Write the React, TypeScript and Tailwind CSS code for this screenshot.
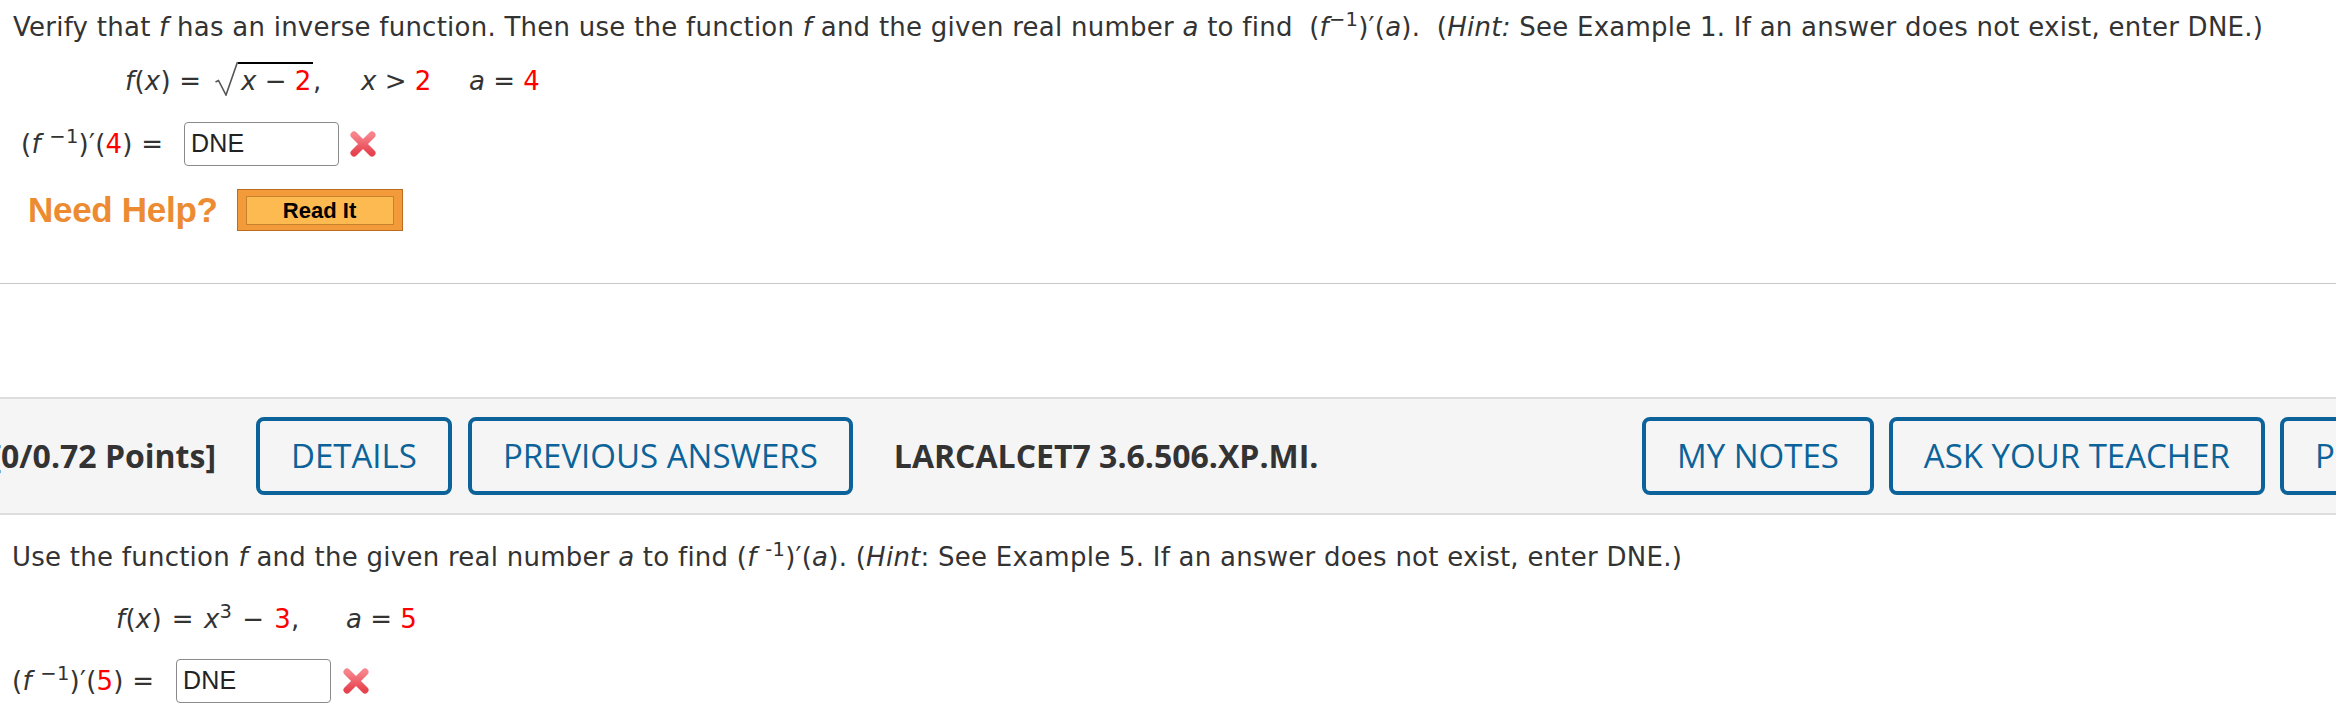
import React from "react";

const Red: React.FC<{ children: React.ReactNode }> = ({ children }) => (
  <span className="text-[#f00]">{children}</span>
);

const WrongMark: React.FC = () => (
  <svg width="28" height="28" viewBox="0 0 28 28" className="shrink-0">
    <defs>
      <linearGradient id="xg" x1="0" y1="0" x2="0" y2="1">
        <stop offset="0" stopColor="#f7838b" />
        <stop offset="1" stopColor="#e6434f" />
      </linearGradient>
    </defs>
    <path
      d="M5 5 L23 23 M23 5 L5 23"
      stroke="url(#xg)"
      strokeWidth="7"
      strokeLinecap="round"
      fill="none"
    />
  </svg>
);

const AnswerBox: React.FC<{ value: string }> = ({ value }) => (
  <div className="w-[155px] h-[44px] shrink-0 border-[1.5px] border-[#8a8a8a] rounded-[4px] bg-white flex items-center pl-[6px] font-['Liberation_Sans',Arial,sans-serif] text-[25px] text-[#222]">
    {value}
  </div>
);

const BarButton: React.FC<{ label: string; className?: string }> = ({
  label,
  className = "",
}) => (
  <div
    className={`h-[78px] shrink-0 border-[4px] border-[#0b6399] rounded-[8px] px-[31px] flex items-center text-[33px] text-[#0b6399] ${className}`}
  >
    {label}
  </div>
);

const App: React.FC = () => {
  return (
    <div className="w-[2336px] h-[714px] overflow-hidden bg-white text-[#333] font-['DejaVu_Sans',Verdana,sans-serif] text-[26px] tracking-[0.25px]">
      {/* first question */}
      <div className="pl-[13px] pt-[12px]">
        <p className="h-[30px] leading-[30px] whitespace-nowrap">
          Verify that <i>f</i> has an inverse function. Then use the function{" "}
          <i>f</i> and the given real number <i>a</i> to find{" "}
          <span className="ml-[8px]">
            (<i>f</i>
            <sup>−1</sup>)′(<i>a</i>).
          </span>{" "}
          <span className="ml-[8px]">
            (<i>Hint:</i> See Example 1. If an answer does not exist, enter
            DNE.)
          </span>
        </p>

        <div className="mt-[24px] pl-[112px] h-[30px] flex items-end leading-[30px] whitespace-nowrap">
          <span className="w-[90px] shrink-0">
            <i>f</i>(<i>x</i>) =
          </span>
          <span className="inline-flex items-end">
            <svg width="23" height="35" viewBox="0 0 23 35" className="shrink-0">
              <path
                d="M0.5 21 L3.5 19.5 L11 34 L22.5 1"
                stroke="#555"
                strokeWidth="1.6"
                fill="none"
              />
            </svg>
            <span className="border-t-2 border-black pt-[2px] pl-[3px] w-[75px] flex gap-[8px]">
              <i>x</i>
              <span>−</span>
              <Red>2</Red>
            </span>
          </span>
          <span className="w-[48px] shrink-0">,</span>
          <span className="w-[108px] shrink-0 flex gap-[8px]">
            <i>x</i>
            <span>&gt;</span>
            <Red>2</Red>
          </span>
          <span className="flex gap-[8px]">
            <i>a</i>
            <span>=</span>
            <Red>4</Red>
          </span>
        </div>

        <div className="mt-[26px] pl-[8px] h-[44px] flex items-center whitespace-nowrap">
          <span className="w-[163px] shrink-0 leading-[30px]">
            (<i>f</i> <sup>−1</sup>)′(<Red>4</Red>) =
          </span>
          <AnswerBox value="DNE" />
          <span className="ml-[10px]">
            <WrongMark />
          </span>
        </div>

        <div className="mt-[23px] pl-[15px] h-[42px] flex items-center whitespace-nowrap">
          <span className="font-['Liberation_Sans',Arial,sans-serif] font-bold text-[35px] tracking-[-0.3px] text-[#ec8b31]">
            Need Help?
          </span>
          <div className="ml-[19px] w-[166px] h-[42px] shrink-0 border border-[#b96c22] bg-[#f39b3b] pt-[6px] pb-[5px] px-[8px]">
            <div className="h-full border border-[#c8822c] bg-[#fdba50] flex items-center justify-center font-['Liberation_Sans',Arial,sans-serif] font-bold text-[22px] tracking-normal text-black">
              Read It
            </div>
          </div>
        </div>
      </div>

      <div className="mt-[52px] h-[1px] bg-[#c8c8c8]" />

      {/* question header bar */}
      <div className="mt-[113px] h-[118px] bg-[#f5f5f5] border-y-2 border-[#dddddd] flex items-center overflow-hidden whitespace-nowrap font-['Open_Sans',sans-serif] tracking-normal">
        <div className="w-[1642px] shrink-0 flex items-center">
          <div className="w-[216px] shrink-0 flex justify-end">
            <span className="shrink-0 font-bold text-[32px] text-[#333]">
              [0/0.72 Points]
            </span>
          </div>
          <BarButton label="DETAILS" className="ml-[40px]" />
          <BarButton label="PREVIOUS ANSWERS" className="ml-[16px]" />
          <span className="ml-[41px] font-bold text-[32px] text-[#333]">
            LARCALCET7 3.6.506.XP.MI.
          </span>
        </div>
        <BarButton label="MY NOTES" />
        <BarButton label="ASK YOUR TEACHER" className="ml-[15px]" />
        <BarButton label="PRACTICE ANOTHER" className="ml-[15px]" />
      </div>

      {/* second question */}
      <div className="pl-[12px] pt-[27px]">
        <p className="h-[30px] leading-[30px] whitespace-nowrap">
          Use the function <i>f</i> and the given real number <i>a</i> to find
          (<i>f</i> <sup>-1</sup>)′(<i>a</i>). (<i>Hint</i>: See Example 5. If
          an answer does not exist, enter DNE.)
        </p>

        <div className="mt-[32px] pl-[104px] h-[30px] flex items-end leading-[30px] whitespace-nowrap">
          <span className="w-[230px] shrink-0 flex gap-[10px]">
            <span>
              <i>f</i>(<i>x</i>)
            </span>
            <span>=</span>
            <span>
              <i>x</i>
              <sup>3</sup>
            </span>
            <span>−</span>
            <span>
              <Red>3</Red>,
            </span>
          </span>
          <span className="flex gap-[8px]">
            <i>a</i>
            <span>=</span>
            <Red>5</Red>
          </span>
        </div>

        <div className="mt-[25px] h-[44px] flex items-center whitespace-nowrap">
          <span className="w-[164px] shrink-0 leading-[30px]">
            (<i>f</i> <sup>−1</sup>)′(<Red>5</Red>) =
          </span>
          <AnswerBox value="DNE" />
          <span className="ml-[11px]">
            <WrongMark />
          </span>
        </div>
      </div>
    </div>
  );
};

export default App;
